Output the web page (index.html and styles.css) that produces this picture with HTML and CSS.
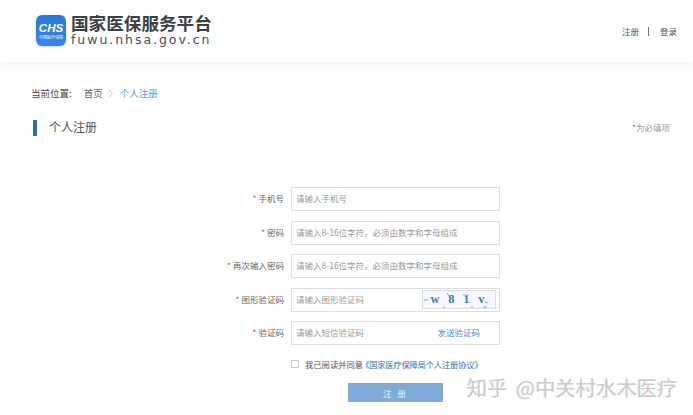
FILE: index.html

```html
<!DOCTYPE html>
<html lang="zh-CN">
<head>
  <meta charset="UTF-8" />
  <meta name="viewport" content="width=device-width, initial-scale=1.0">
  <title>个人注册</title>
  <link rel="stylesheet" href="styles.css">
</head>
<body>

  <header class="top-bar">
    <div class="brand">
      <div class="brand-icon">
        <span class="brand-chs">CHS</span>
        <span class="brand-sub">中国医疗保障</span>
      </div>
      <div class="brand-text">
        <div class="brand-name">国家医保服务平台</div>
        <div class="brand-url">fuwu.nhsa.gov.cn</div>
      </div>
    </div>
    <nav class="top-nav">
      <a>注册</a>
      <span class="nav-sep"></span>
      <a>登录</a>
    </nav>
  </header>

  <div class="crumbs">
    <span class="crumb-label">当前位置:</span>
    <span class="crumb-home">首页</span>
    <svg class="crumb-arrow" width="6" height="9" viewBox="0 0 6 9"><path d="M1 1l3.5 3.5L1 8" fill="none" stroke="#c8ccd2" stroke-width="1"/></svg>
    <span class="crumb-now">个人注册</span>
  </div>

  <div class="page-title">
    <h1>个人注册</h1>
    <span class="required-note"><i>*</i>为必填项</span>
  </div>

  <form class="reg-form">
    <div class="row">
      <label><i>*</i>手机号</label>
      <div class="field"><span class="hint">请输入手机号</span></div>
    </div>
    <div class="row">
      <label><i>*</i>密码</label>
      <div class="field"><span class="hint">请输入8-16位字符，必须由数字和字母组成</span></div>
    </div>
    <div class="row">
      <label><i>*</i>再次输入密码</label>
      <div class="field"><span class="hint">请输入8-16位字符，必须由数字和字母组成</span></div>
    </div>
    <div class="row">
      <label><i>*</i>图形验证码</label>
      <div class="field">
        <span class="hint">请输入图形验证码</span>
        <div class="captcha">
          <svg class="captcha-noise" width="72" height="19" viewBox="0 0 72 19">
            <path d="M1 9h4M24 2l2 3M48 16h2M60 16h4M20 16h2M40 4h2M62 11l3 1" stroke="#7fb0d6" stroke-width="1" fill="none"/>
          </svg>
          <span>w</span><span>8</span><span>1</span><span>v</span>
        </div>
      </div>
    </div>
    <div class="row">
      <label><i>*</i>验证码</label>
      <div class="field">
        <span class="hint">请输入短信验证码</span>
        <a class="send-code">发送验证码</a>
      </div>
    </div>
    <div class="agree">
      <span class="check"></span>
      <span>我已阅读并同意<a>《国家医疗保障局个人注册协议》</a></span>
    </div>
    <div class="submit-wrap">
      <button type="button" class="submit">注 册</button>
    </div>
  </form>

  <div class="watermark">知乎 @中关村水木医疗</div>

</body>
</html>
```

FILE: styles.css

```css
* {
  box-sizing: border-box;
}

html, body {
  height: 415px;
  overflow: hidden;
}

body {
  margin: 0;
  position: relative;
  background: #fff;
  color: #555;
  font-family: "Noto Sans CJK SC", "Liberation Sans", sans-serif;
}

.top-bar {
  height: 62px;
  padding: 0 16px 0 36px;
  display: flex;
  justify-content: space-between;
  align-items: center;
  background: #fff;
  box-shadow: 0 3px 10px rgba(0, 0, 0, 0.06);
}

.brand {
  display: flex;
  align-items: center;
  gap: 5px;
  margin-top: -1px;
}

.brand-icon {
  width: 30px;
  height: 31px;
  border-radius: 6px;
  background: linear-gradient(to bottom, #2a78dc, #3a84ea);
  box-shadow: 0 1px 2px rgba(60, 110, 200, 0.3);
  color: #fff;
  display: flex;
  flex-direction: column;
  align-items: center;
  justify-content: center;
  padding-top: 2px;
}

.brand-chs {
  font-family: "Liberation Sans", sans-serif;
  font-weight: 700;
  font-style: italic;
  font-size: 11.5px;
  line-height: 11px;
}

.brand-sub {
  font-size: 4px;
  line-height: 6px;
  white-space: nowrap;
}

.brand-name {
  font-size: 17.6px;
  line-height: 18px;
  font-weight: 700;
  color: #3c3f44;
}

.brand-url {
  font-family: "DejaVu Sans", sans-serif;
  font-size: 12.5px;
  line-height: 15px;
  letter-spacing: 1.95px;
  color: #4a4d52;
}

.top-nav {
  display: flex;
  align-items: center;
  font-size: 8.5px;
  color: #555;
}

.nav-sep {
  width: 1px;
  height: 9px;
  margin: 0 11px 0 9px;
  background: #777;
}

.crumbs {
  height: 16px;
  margin: 23px 0 0 31px;
  display: flex;
  align-items: center;
  font-size: 9.5px;
  color: #666;
}

.crumb-label {
  color: #444;
  margin-right: 12px;
}

.crumb-arrow {
  margin: 0 6px 0 5px;
}

.crumb-now {
  color: #5b9bd5;
}

.page-title {
  height: 16px;
  margin: 19px 23px 0 33px;
  padding-left: 12px;
  border-left: 4px solid #2a6db0;
  display: flex;
  justify-content: space-between;
  align-items: center;
}

.page-title h1 {
  margin: 0 0 3px;
  font-size: 12px;
  font-weight: 400;
  color: #555;
}

.required-note {
  margin-bottom: 2px;
  font-size: 8.5px;
  color: #999;
}

.required-note i {
  font-style: normal;
  color: #e2574c;
}

.reg-form {
  margin-top: 51px;
  display: flex;
  flex-direction: column;
}

.row {
  height: 24px;
  margin-bottom: 9.6px;
  display: flex;
  align-items: center;
}

.row label {
  width: 284px;
  margin: 0 7px 2px 0;
  text-align: right;
  font-size: 8.5px;
  color: #666;
}

.row label i {
  font-style: normal;
  margin-right: 2px;
  color: #e2574c;
}

.field {
  width: 209px;
  height: 24px;
  padding: 0 5px 2px 4px;
  border: 1px solid #dcdfe6;
  display: flex;
  align-items: center;
  justify-content: space-between;
}

.hint {
  font-size: 8.5px;
  color: #999;
}

.captcha {
  position: relative;
  width: 74px;
  height: 19px;
  margin: 2px -2px 0 0;
  padding: 0 6px 0 3px;
  border: 1px solid #d8dfe8;
  background: #f6f8fb;
  display: flex;
  align-items: center;
  justify-content: space-around;
  font-family: "Liberation Serif", serif;
  font-weight: 700;
  font-size: 12.5px;
  color: #3b80b8;
}

.captcha-noise {
  position: absolute;
  left: 0;
  top: 0;
}

.send-code {
  margin-right: 14px;
  font-size: 8.5px;
  color: #4a90d9;
}

.agree {
  margin: 1px 0 0 291px;
  height: 16px;
  display: flex;
  align-items: center;
  gap: 6px;
  font-size: 8.3px;
  color: #555;
}

.agree a {
  margin-left: 2px;
  font-feature-settings: "halt";
  letter-spacing: -0.2px;
  color: #2f6fb5;
}

.check {
  width: 8px;
  height: 8px;
  border: 1px solid #c9ccd2;
}

.submit-wrap {
  margin: 6px 0 0 348px;
}

.submit {
  width: 95px;
  height: 19px;
  border: none;
  padding: 0;
  background: #81abd7;
  color: #e8f0f8;
  font-family: inherit;
  font-size: 8.5px;
  letter-spacing: 2px;
}

.watermark {
  position: absolute;
  left: 467px;
  top: 374px;
  font-size: 20.3px;
  line-height: 26px;
  word-spacing: 4px;
  white-space: nowrap;
  color: #cbcbcb;
  text-shadow: 1px 1px 0 #fff, -1px 0 0 #e8e8e8;
}
```
